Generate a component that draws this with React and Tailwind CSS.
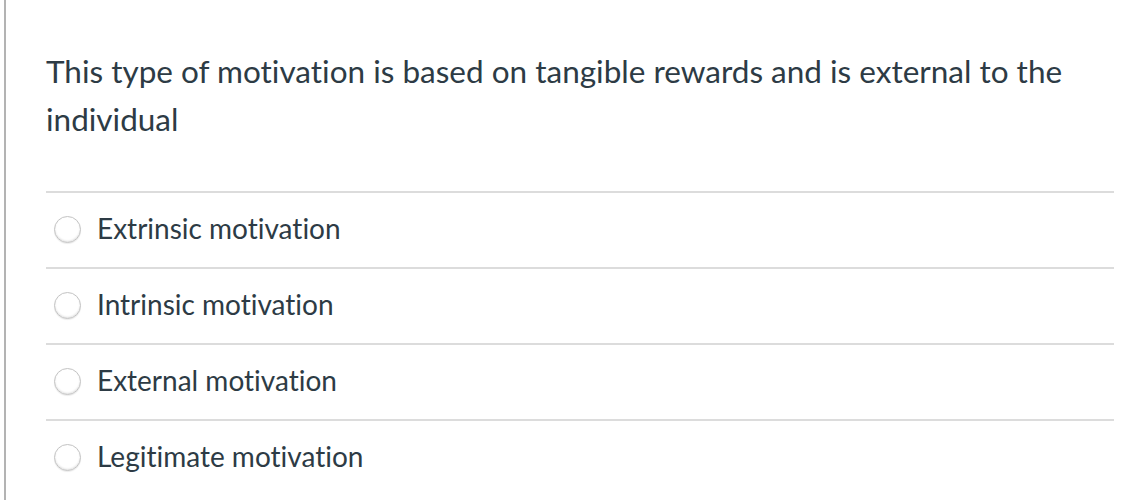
import React from "react";

const answers = [
  "Extrinsic motivation",
  "Intrinsic motivation",
  "External motivation",
  "Legitimate motivation",
];

function Radio() {
  return (
    <span className="w-[27px] h-[27px] mb-[2px] rounded-full border border-[#c4c4c4] bg-white shadow-[inset_0_-1px_2px_rgba(0,0,0,0.12),0_1px_1px_rgba(0,0,0,0.08)] shrink-0" />
  );
}

export default function App() {
  return (
    <div
      className="w-[1148px] h-[500px] bg-white overflow-hidden [font-variant-ligatures:none]"
      style={{ fontFamily: "Lato, 'Open Sans', sans-serif" }}
    >
      <div className="ml-[4px] h-full border-l-2 border-[#b3b3b3] pl-[40px] pr-[34px]">
        <div className="pt-[47px] pb-[48px] text-[31.5px] leading-[48px] text-[#2d3b45]">
          This type of motivation is based on tangible rewards and is external to the
          individual
        </div>
        <div className="flex flex-col">
          {answers.map((a) => (
            <div
              key={a}
              className="h-[76px] border-t-2 border-[#dcdcdc] flex items-center pl-[8px] gap-[16px]"
            >
              <Radio />
              <span className="pb-[5px] text-[28px] text-[#2d3b45]">{a}</span>
            </div>
          ))}
        </div>
      </div>
    </div>
  );
}
